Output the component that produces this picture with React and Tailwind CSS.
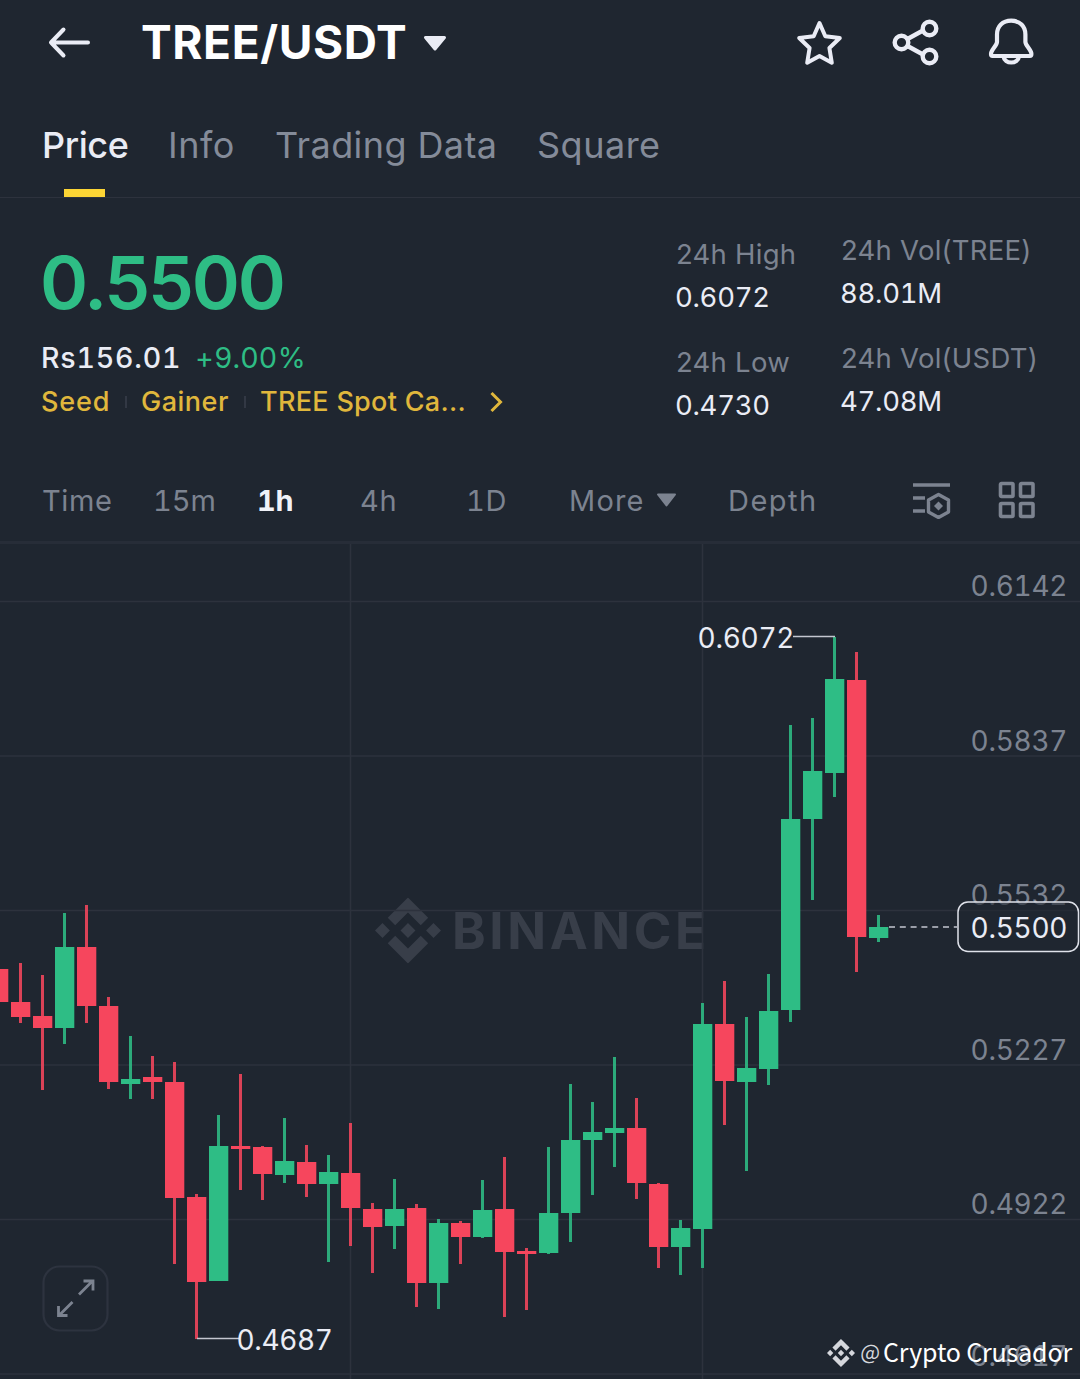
import React from 'react';
import { SiBinance } from 'react-icons/si';

const UP = '#2ebd85';
const DOWN = '#f6465d';
const CHART_TOP = 544;

const tabs = [
  { label: 'Price', className: 'w-[126px] text-[#eaecf5] font-medium tracking-[-0.4px]' },
  { label: 'Info', className: 'w-[107px] text-[#848b99] tracking-[0.5px]' },
  { label: 'Trading Data', className: 'w-[262px] text-[#848b99] tracking-[0.4px]' },
  { label: 'Square', className: 'text-[#848b99] tracking-[0.5px]' },
];

const tags = [
  { label: 'Seed', className: 'w-[100px] tracking-[0.9px]' },
  { label: 'Gainer', className: 'w-[119px] tracking-[0.5px]' },
  { label: 'TREE Spot Ca...', className: 'w-[229px] tracking-[0.3px]' },
];

const stats = [
  [
    { label: '24h High', value: '0.6072' },
    { label: '24h Low', value: '0.4730' },
  ],
  [
    { label: '24h Vol(TREE)', value: '88.01M' },
    { label: '24h Vol(USDT)', value: '47.08M' },
  ],
];

const intervals = [
  { label: 'Time', className: 'w-[111px] tracking-[0.6px]' },
  { label: '15m', className: 'w-[105px]' },
  { label: '1h', className: '-ml-px w-[103px] font-bold tracking-[-0.3px] text-[#f0f2f8]' },
  { label: '4h', className: 'w-[107px] tracking-[0.8px]' },
  { label: '1D', className: '-ml-px w-[103px] tracking-[0.8px]' },
];

const priceLevels = [
  { label: '0.6142', y: 601.5, baseline: 596 },
  { label: '0.5837', y: 756, baseline: 751 },
  { label: '0.5532', y: 910.5, baseline: 905 },
  { label: '0.5227', y: 1065, baseline: 1060 },
  { label: '0.4922', y: 1219.5, baseline: 1214 },
  { label: '0.4617', y: 1374, baseline: 1366 },
];

// [direction, high, body top, body bottom, low]
const candles = [
  ['d', 969, 969, 1002, 1002],
  ['d', 963, 1002, 1017, 1023],
  ['d', 975, 1016, 1028, 1090],
  ['u', 913, 947, 1028, 1044],
  ['d', 905, 947, 1006, 1023],
  ['d', 997, 1006, 1082, 1089],
  ['u', 1036, 1079, 1084, 1099],
  ['d', 1056, 1077, 1082, 1099],
  ['d', 1062, 1082, 1198, 1264],
  ['d', 1194, 1197, 1282, 1339],
  ['u', 1115, 1146, 1281, 1281],
  ['d', 1074, 1146, 1149, 1190],
  ['d', 1146, 1147, 1174, 1200],
  ['u', 1118, 1161, 1175, 1183],
  ['d', 1145, 1162, 1184, 1197],
  ['u', 1155, 1172, 1184, 1262],
  ['d', 1123, 1173, 1208, 1246],
  ['d', 1203, 1209, 1227, 1273],
  ['u', 1179, 1209, 1226, 1249],
  ['d', 1204, 1208, 1283, 1307],
  ['u', 1219, 1223, 1283, 1309],
  ['d', 1221, 1223, 1237, 1264],
  ['u', 1180, 1210, 1237, 1238],
  ['d', 1157, 1209, 1252, 1317],
  ['d', 1248, 1251, 1254, 1310],
  ['u', 1147, 1213, 1253, 1254],
  ['u', 1084, 1140, 1213, 1242],
  ['u', 1102, 1132, 1140, 1195],
  ['u', 1057, 1128, 1133, 1167],
  ['d', 1098, 1128, 1183, 1199],
  ['d', 1183, 1184, 1247, 1268],
  ['u', 1220, 1228, 1247, 1275],
  ['u', 1003, 1024, 1229, 1268],
  ['d', 981, 1024, 1081, 1125],
  ['u', 1017, 1068, 1082, 1171],
  ['u', 974, 1011, 1069, 1085],
  ['u', 725, 819, 1010, 1022],
  ['u', 718, 771, 819, 900],
  ['u', 637, 679, 773, 797],
  ['d', 652, 680, 937, 972],
  ['u', 915, 927, 938, 942],
];

function Header() {
  return (
    <header className="flex h-[86px] items-center pl-[48px]">
      <svg className="h-[36px] w-[42px]" viewBox="0 0 42 36" fill="none" stroke="#eaecf5" strokeWidth="4" strokeLinecap="round" strokeLinejoin="round">
        <path d="M40 17.500H3M15.500 4.500L3 17.500L15.500 30.500" />
      </svg>
      <h1 className="ml-[51px] w-[281px] pb-[1px] text-[46px] leading-[57px] font-bold tracking-[0.6px] whitespace-nowrap text-white">
        TREE/USDT
      </h1>
      <svg className="h-[17px] w-[26px]" viewBox="0 0 26 17">
        <path d="M3.500 2.500h19L13 14z" fill="#eaecf5" stroke="#eaecf5" strokeWidth="3" strokeLinejoin="round" />
      </svg>
      <div className="ml-[348px] flex items-center gap-[48px]">
        <svg className="h-[50px] w-[48px]" viewBox="0 0 48 50" fill="none" stroke="#eaecf5" strokeWidth="4" strokeLinejoin="round">
          <path d="M23.500 5L29.300 18.200L43.800 20L33.400 30L35.800 44.700L23.500 38L11.200 44.700L13.600 30L3.200 20L17.700 18.200Z" />
        </svg>
        <svg className="h-[50px] w-[48px]" viewBox="0 0 48 50" fill="none" stroke="#eaecf5" strokeWidth="4.400">
          <circle cx="9.500" cy="24.500" r="6.800" />
          <circle cx="37.500" cy="10.500" r="6.800" />
          <circle cx="37.500" cy="38.500" r="6.800" />
          <path d="M15.500 21L31 12.500M15.500 28L31 36.500" />
        </svg>
        <svg className="h-[50px] w-[48px]" viewBox="0 0 48 50" fill="none" stroke="#eaecf5" strokeWidth="4.200" strokeLinejoin="round">
          <path d="M23.200 2.700C14.500 2.700 9 8.500 9 16.500V24C9 27.500 3 32 3 36C3 37.300 3.600 38 4.500 38H41.900C42.800 38 43.400 37.300 43.400 36C43.400 32 37.400 27.500 37.400 24V16.500C37.400 8.500 31.900 2.700 23.200 2.700Z" />
          <path d="M15.500 38.500C16.500 46.500 30 46.500 31 38.500" />
        </svg>
      </div>
    </header>
  );
}

function Tabs() {
  return (
    <nav className="flex h-[112px] border-b border-[#2d323d] pl-[42px] pt-[31px]">
      {tabs.map((tab, index) => (
        <div key={tab.label} className={`flex flex-col text-[36px] leading-[56px] whitespace-nowrap ${tab.className}`}>
          {tab.label}
          {index === 0 && <span className="mt-[16px] ml-[22px] h-[8px] w-[41px] bg-[#fcd535]" />}
        </div>
      ))}
    </nav>
  );
}

function Summary() {
  return (
    <section className="flex h-[262px] pl-[41px]">
      <div className="w-[635px] pt-[45px]">
        <div className="-ml-px text-[73px] leading-[80px] font-semibold tracking-[-2.200px] text-[#2ebd85]">0.5500</div>
        <div className="mt-[13px] flex text-[28.500px] leading-[44px] whitespace-nowrap">
          <span className="w-[154px] font-medium tracking-[0.8px] tabular-nums text-[#eaecf5]">Rs156.01</span>
          <span className="tracking-[0.7px] text-[#2ebd85]">+9.00%</span>
        </div>
        <div className="flex items-center text-[27px] leading-[44px] font-medium whitespace-nowrap text-[#e0b73c]">
          {tags.map((tag, index) => (
            <div key={tag.label} className={`flex items-center justify-between ${tag.className}`}>
              {tag.label}
              {index < 2 && <span className="mr-[14px] h-[12px] w-[2px] bg-[#323844]" />}
            </div>
          ))}
          <svg className="h-[22px] w-[14px]" viewBox="0 0 14 22" fill="none" stroke="#e0b73c" strokeWidth="3">
            <path d="M2.500 2L11.500 11L2.500 20" />
          </svg>
        </div>
      </div>
      {stats.map((column, index) => (
        <div key={index} className={index === 0 ? 'w-[165px] pt-[35px]' : 'pt-[31px]'}>
          {column.map((stat) => (
            <div key={stat.label} className="h-[108px] text-[27.500px] leading-[43px] whitespace-nowrap">
              <div className="tracking-[0.25px] text-[#7c8390]">{stat.label}</div>
              <div className="-ml-px tracking-[-0.3px] tabular-nums text-[#eaecf5]">{stat.value}</div>
            </div>
          ))}
        </div>
      ))}
    </section>
  );
}

function Intervals() {
  return (
    <section className="flex h-[84px] items-center border-b-[3px] border-[#272d38] pl-[42px] text-[29px] leading-[40px] whitespace-nowrap tabular-nums text-[#7c8390]">
      {intervals.map((item) => (
        <span key={item.label} className={item.className}>{item.label}</span>
      ))}
      <span className="w-[87px] tracking-[1.200px]">More</span>
      <svg className="h-[15px] w-[21px]" viewBox="0 0 21 15">
        <path d="M2 1.500h17L10.500 12.500z" fill="#7c8390" stroke="#7c8390" strokeWidth="2" strokeLinejoin="round" />
      </svg>
      <span className="ml-[51px] w-[184px] tracking-[1.500px]">Depth</span>
      <svg className="mb-[2px] h-[38px] w-[40px]" viewBox="0 0 40 38" fill="none" stroke="#7c8390" strokeWidth="3.400">
        <path d="M1 4H38M1 17H13M1 30H13" />
        <path d="M26.500 13.500L36.500 19V31L26.500 36.500L16.500 31V19Z" strokeLinejoin="round" />
        <path d="M26.500 20.500L31 25L26.500 29.500L22 25Z" fill="#7c8390" stroke="none" />
      </svg>
      <svg className="mb-[2px] ml-[46px] h-[38px] w-[38px]" viewBox="0 0 38 38" fill="none" stroke="#7c8390" strokeWidth="3.600">
        <rect x="2.500" y="2.500" width="12.500" height="13" rx="1" />
        <rect x="22.500" y="2.500" width="12.500" height="13" rx="1" />
        <rect x="2.500" y="22.500" width="12.500" height="13" rx="1" />
        <rect x="22.500" y="22.500" width="12.500" height="13" rx="1" />
      </svg>
    </section>
  );
}

function Candle({ candle, index }) {
  const [direction, high, top, bottom, low] = candle;
  const color = direction === 'u' ? UP : DOWN;
  const x = index * 22 - 11;

  return (
    <g fill={color}>
      <rect x={x + 8} y={high} width="3" height={low - high} opacity="0.87" />
      <rect x={x} y={top} width="19.300" height={bottom - top} />
    </g>
  );
}

function Chart() {
  return (
    <section className="relative h-[835px] overflow-hidden">
      <svg className="block h-[835px] w-[1080px]" viewBox={`0 ${CHART_TOP} 1080 835`}>
        {/* watermark */}
        <SiBinance x="375" y="897.500" size={66} color="#383e49" />
        <text x="452" y="948.500" textLength="254" fontSize="51" fontWeight="700" fill="#383e49">BINANCE</text>

        <g stroke="#2d323d" strokeWidth="1.600">
          {priceLevels.map((level) => (
            <line key={level.label} x1="0" x2="1080" y1={level.y} y2={level.y} />
          ))}
          <line x1="350.500" x2="350.500" y1="544" y2="1379" />
          <line x1="702.500" x2="702.500" y1="544" y2="1379" />
        </g>

        {candles.map((candle, index) => (
          <Candle key={index} candle={candle} index={index} />
        ))}

        <g fontSize="28" fill="#7c8390" className="tabular-nums">
          {priceLevels.map((level) => (
            <text key={level.label} x="970.500" y={level.baseline} textLength="97">{level.label}</text>
          ))}
        </g>

        {/* high and low markers */}
        <g stroke="#c3c6cf" strokeWidth="1.700">
          <line x1="793" x2="835" y1="636.500" y2="636.500" />
          <line x1="197" x2="239" y1="1338.500" y2="1338.500" />
          <line x1="889" x2="957" y1="927" y2="927" strokeDasharray="6 4.800" />
        </g>
        <g fontSize="28" fill="#eaecf5" className="tabular-nums">
          <text x="697.500" y="648" textLength="97">0.6072</text>
          <text x="236.500" y="1350" textLength="96.500">0.4687</text>
          <rect x="958" y="902" width="120.500" height="49.500" rx="10" fill="#1f2630" fillOpacity="0.6" stroke="#dfe2ea" strokeWidth="1.500" />
          <text x="970.500" y="938" textLength="97">0.5500</text>
        </g>

        {/* fullscreen button */}
        <rect x="43.500" y="1266.500" width="64" height="64" rx="16" fill="none" stroke="#2d333f" strokeWidth="2.200" />
        <path
          d="M79 1294.500L93 1280.500M83.500 1281H93V1290.500M72.500 1302L58.500 1316M67.500 1315.500H58.500V1306"
          fill="none"
          stroke="#7c8390"
          strokeWidth="2.800"
        />
      </svg>

      <div className="absolute right-[8px] bottom-[10px] flex h-[36px] items-center font-['Noto_Sans_CJK_SC',sans-serif] text-[25px] leading-[36px] whitespace-nowrap text-white">
        <SiBinance className="mt-[3px]" size={28} color="#d5d7dc" />
        <span className="ml-[5px] text-[21px] text-[#d5d7dc]">@</span>
        <span className="ml-[3px] tracking-[-0.15px]">Crypto Crusador</span>
      </div>
    </section>
  );
}

function App() {
  return (
    <main className="h-[1379px] w-[1080px] overflow-hidden bg-[#1f2630] font-['Inter',sans-serif]">
      <Header />
      <Tabs />
      <Summary />
      <Intervals />
      <Chart />
    </main>
  );
}

export default App;
